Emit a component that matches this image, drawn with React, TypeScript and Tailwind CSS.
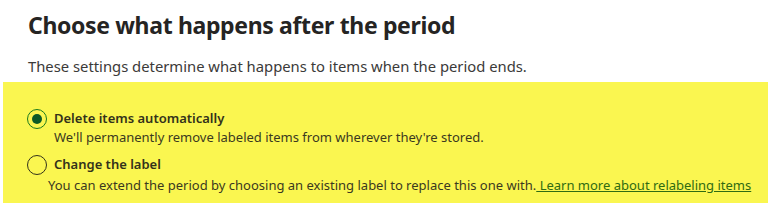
import React, { useState } from "react";

export default function App() {
  const [choice, setChoice] = useState<string>("delete");

  return (
    <div className="w-[768px] h-[203px] bg-white overflow-hidden font-['Noto_Sans',sans-serif] text-[#323130]">
      <div className="pl-[28px] pt-[9px]">
        <h1 className="text-[23px] leading-[32px] font-bold tracking-[-0.35px] text-[#252423]">
          Choose what happens after the period
        </h1>
        <p className="mt-[15px] text-[14.8px] leading-[20px] text-[#3b3a39]">
          These settings determine what happens to items when the period ends.
        </p>
      </div>
      <div className="ml-[3px] mt-[6px] h-[200px] bg-[#faf650] pl-[24px] pt-[27px]">
        <label className="flex items-start gap-[7px] cursor-pointer" onClick={() => setChoice("delete")}>
          <span className="flex h-[20px] w-[20px] shrink-0 items-center justify-center rounded-full border-[1.5px] border-[#1c7a1c]">
            {choice === "delete" && <span className="h-[10px] w-[10px] rounded-full bg-[#0c5a26]" />}
          </span>
          <span className="flex flex-col">
            <span className="text-[13px] leading-[19px] font-semibold text-[#33321a]">Delete items automatically</span>
            <span className="text-[13px] leading-[19px] text-[#3a391f]">
              We'll permanently remove labeled items from wherever they're stored.
            </span>
          </span>
        </label>
        <label className="mt-[8px] flex items-start gap-[7px] cursor-pointer" onClick={() => setChoice("change")}>
          <span className="flex h-[20px] w-[20px] shrink-0 items-center justify-center rounded-full border-[1.5px] border-[#33321a]">
            {choice === "change" && <span className="h-[10px] w-[10px] rounded-full bg-[#0c5a26]" />}
          </span>
          <span className="text-[13px] leading-[19px] font-semibold text-[#33321a]">Change the label</span>
        </label>
        <p className="ml-[21px] mt-[1px] text-[13px] leading-[19px] text-[#3a391f]">
          You can extend the period by choosing an existing label to replace this one with.
          <a href="#" className="text-[#2f6b12] underline"> Learn more about relabeling items</a>
        </p>
      </div>
    </div>
  );
}
